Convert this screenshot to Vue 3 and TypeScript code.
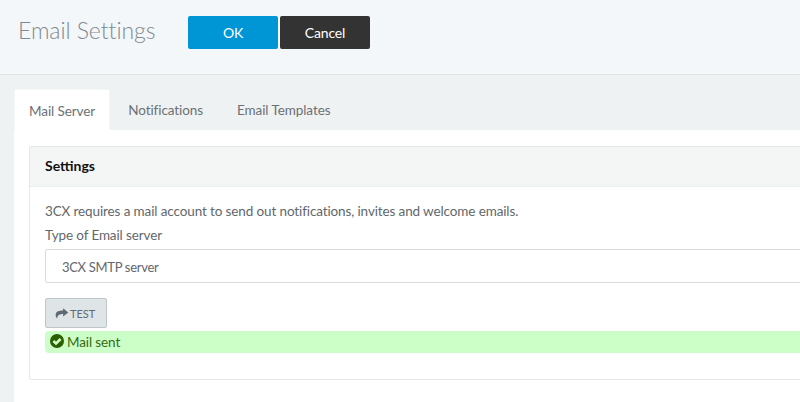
<script setup lang="ts">
const tabs: string[] = ['Mail Server', 'Notifications', 'Email Templates']
</script>

<template>
  <div class="page">
    <header class="head">
      <h1>Email Settings</h1>
      <button class="btn ok">OK</button>
      <button class="btn cancel">Cancel</button>
    </header>
    <main class="body">
      <nav class="tabs">
        <a v-for="(t, i) in tabs" :key="t" class="tab" :class="{ active: i === 0 }">{{ t }}</a>
      </nav>
      <section class="content">
        <div class="panel">
          <div class="panel-head">Settings</div>
          <div class="panel-body">
            <p class="intro">3CX requires a mail account to send out notifications, invites and welcome emails.</p>
            <label class="lbl">Type of Email server</label>
            <div class="select">3CX SMTP server</div>
            <button class="test">
              <svg width="14" height="11" viewBox="0 0 13 11"><path d="M7.6 0.2 L12.8 4.4 L7.6 8.6 V6 C4.4 6 2.4 6.6 1.6 10.4 C0.4 9 0 7.8 0.2 6.4 C0.6 3.6 3.6 2.6 7.6 2.6 Z" fill="#5f6a72"/></svg>
              TEST
            </button>
            <div class="alert">
              <svg class="check" width="14" height="14" viewBox="0 0 14 14"><circle cx="7" cy="7" r="7" fill="#2a6000"/><path d="M3.4 7 L6 9.4 L10.6 5" fill="none" stroke="#d2ffc8" stroke-width="2.6"/></svg>
              <span>Mail sent</span>
            </div>
          </div>
        </div>
      </section>
    </main>
  </div>
</template>

<style scoped>
.page { width: 800px; height: 402px; overflow: hidden; font-family: "Lato", "Noto Sans", sans-serif; background: #eff2f3; color: #5f6468; }
.head { height: 74px; background: #f4f7f9; border-bottom: 1px solid #e3e6e8; display: flex; align-items: flex-start; padding-left: 18px; }
h1 { margin: 14px 0 0; width: 170px; font-size: 23px; line-height: 32px; font-weight: 300; letter-spacing: -0.05px; color: #7f8a92; font-family: "Lato", sans-serif; }
.btn { margin-top: 16px; height: 33px; width: 90px; border: 0; border-radius: 2px; color: #fff; font: 14px "Lato", sans-serif; letter-spacing: -0.15px; padding: 0; }
.ok { background: #0096d6; margin-right: 2px; }
.cancel { background: #333; }
.body { padding: 14px 0 0 14px; }
.tabs { display: flex; height: 41px; }
.tab { box-sizing: border-box; height: 41px; padding: 0 15px; line-height: 42px; font-size: 13.5px; letter-spacing: -0.08px; margin-right: 4px; color: #6b7074; }
.tab.active { background: #fff; border: 1px solid #f4f5f6; border-bottom: 0; border-radius: 2px 2px 0 0; margin-right: 3px; padding: 0 14px 0 14px; }
.content { width: 900px; background: #fff; padding: 16px 15px; height: 300px; box-sizing: border-box; }
.panel { width: 880px; height: 234px; box-sizing: border-box; border: 1px solid #e4e7e9; border-radius: 2px; }
.panel-head { height: 39px; line-height: 37px; background: #f4f6f6; border-bottom: 1px solid #eceff0; padding-left: 15px; color: #111; font-weight: 700; font-size: 14px; }
.panel-body { padding: 12px 15px 0; }
.intro, .lbl { display: block; margin: 0; font-size: 13.5px; letter-spacing: -0.12px; line-height: 24px; color: #62676b; }
.select { height: 34px; box-sizing: border-box; border: 1px solid #d6dcdf; border-radius: 2px; line-height: 34px; padding-left: 16px; font-size: 13px; letter-spacing: -0.3px; color: #62676b; margin-top: 2px; }
.test { display: flex; align-items: center; gap: 1px; margin-top: 15px; width: 62px; height: 30px; padding: 0 0 0 9px; box-sizing: border-box; background: #dfe4e7; border: 1px solid #bcc6cb; border-radius: 2px; color: #5f6a72; font: 11px "Lato", sans-serif; }
.alert { display: flex; align-items: center; gap: 3px; margin-top: 3px; height: 22px; padding-left: 5px; background: #ccffc8; border-radius: 4px 0 0 4px; color: #376a10; font-size: 13.5px; letter-spacing: -0.12px; }
.check { margin-top: -3px; }
</style>
